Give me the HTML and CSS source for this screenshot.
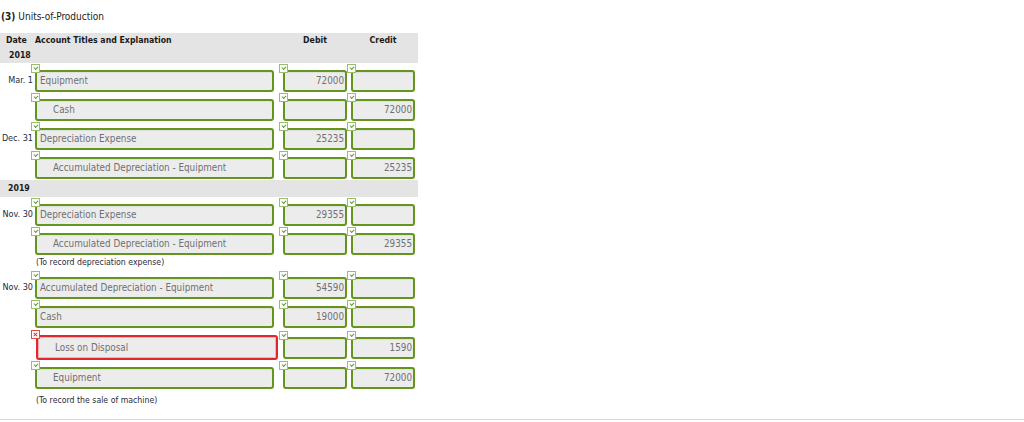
FILE: index.html
```html
<!DOCTYPE html>
<html>
<head>
<meta charset="utf-8">
<link rel="stylesheet" href="styles.css">
</head>
<body>
<div class="title"><b>(3)</b> Units-of-Production</div>
<div class="journal">
  <div class="band head">
    <div class="hrow">
      <span class="c-date">Date</span>
      <span class="c-acct">Account Titles and Explanation</span>
      <span class="c-debit">Debit</span>
      <span class="c-credit">Credit</span>
    </div>
    <div class="hrow"><span class="year">2018</span></div>
  </div>

  <div class="row">
    <div class="c-date date">Mar. 1</div>
    <div class="c-acct field"><i class="chk"></i>Equipment</div>
    <div class="c-debit field num"><i class="chk"></i>72000</div>
    <div class="c-credit field num"><i class="chk"></i></div>
  </div>
  <div class="row">
    <div class="c-date date"></div>
    <div class="c-acct field indent"><i class="chk"></i>Cash</div>
    <div class="c-debit field num"><i class="chk"></i></div>
    <div class="c-credit field num"><i class="chk"></i>72000</div>
  </div>
  <div class="row">
    <div class="c-date date">Dec. 31</div>
    <div class="c-acct field"><i class="chk"></i>Depreciation Expense</div>
    <div class="c-debit field num"><i class="chk"></i>25235</div>
    <div class="c-credit field num"><i class="chk"></i></div>
  </div>
  <div class="row">
    <div class="c-date date"></div>
    <div class="c-acct field indent"><i class="chk"></i>Accumulated Depreciation - Equipment</div>
    <div class="c-debit field num"><i class="chk"></i></div>
    <div class="c-credit field num"><i class="chk"></i>25235</div>
  </div>

  <div class="band year-band"><span class="year">2019</span></div>

  <div class="row">
    <div class="c-date date">Nov. 30</div>
    <div class="c-acct field"><i class="chk"></i>Depreciation Expense</div>
    <div class="c-debit field num"><i class="chk"></i>29355</div>
    <div class="c-credit field num"><i class="chk"></i></div>
  </div>
  <div class="row">
    <div class="c-date date"></div>
    <div class="c-acct field indent"><i class="chk"></i>Accumulated Depreciation - Equipment</div>
    <div class="c-debit field num"><i class="chk"></i></div>
    <div class="c-credit field num"><i class="chk"></i>29355</div>
  </div>
  <div class="note">(To record depreciation expense)</div>

  <div class="row">
    <div class="c-date date">Nov. 30</div>
    <div class="c-acct field"><i class="chk"></i>Accumulated Depreciation - Equipment</div>
    <div class="c-debit field num"><i class="chk"></i>54590</div>
    <div class="c-credit field num"><i class="chk"></i></div>
  </div>
  <div class="row">
    <div class="c-date date"></div>
    <div class="c-acct field"><i class="chk"></i>Cash</div>
    <div class="c-debit field num"><i class="chk"></i>19000</div>
    <div class="c-credit field num"><i class="chk"></i></div>
  </div>
  <div class="row row-tall">
    <div class="c-date date"></div>
    <div class="c-acct field indent wrong"><i class="chk bad"></i>Loss on Disposal</div>
    <div class="c-debit field num low"><i class="chk"></i></div>
    <div class="c-credit field num low"><i class="chk"></i>1590</div>
  </div>
  <div class="row">
    <div class="c-date date"></div>
    <div class="c-acct field indent"><i class="chk"></i>Equipment</div>
    <div class="c-debit field num"><i class="chk"></i></div>
    <div class="c-credit field num"><i class="chk"></i>72000</div>
  </div>
  <div class="note note-last">(To record the sale of machine)</div>
</div>
<div class="rule"></div>
</body>
</html>
```

FILE: styles.css
```css
html, body {
  margin: 0;
  padding: 0;
  background: #ffffff;
}
body {
  font-family: "DejaVu Sans Condensed", "DejaVu Sans", "Liberation Sans", sans-serif;
  font-stretch: condensed;
  font-size: 10px;
  color: #222;
  width: 1024px;
  height: 422px;
  overflow: hidden;
}
.title {
  padding: 10px 0 0 1px;
  margin-bottom: 10px;
  height: 23px;
  line-height: 13px;
  font-size: 10px;
  color: #222;
  box-sizing: border-box;
}
.title b {
  font-weight: bold;
}
.journal {
  width: 418px;
}
.band {
  background: #e4e4e4;
}
.head {
  height: 30px;
  padding-top: 0;
}
.hrow {
  display: flex;
  height: 15px;
  line-height: 15px;
  font-weight: bold;
  font-size: 8.7px;
  color: #1a1a1a;
}
.hrow .c-date {
  padding-left: 6px;
  box-sizing: border-box;
}
.hrow .c-debit, .hrow .c-credit {
  text-align: center;
}
.year {
  padding-left: 9px;
  font-weight: bold;
  color: #1a1a1a;
}
.year-band {
  margin-top: 1px;
  height: 17px;
  line-height: 17px;
  font-size: 8.7px;
}
.year-band .year {
  padding-left: 8px;
}
.c-date {
  width: 35px;
  flex: none;
}
.c-acct {
  width: 239px;
  flex: none;
}
.c-debit {
  width: 64px;
  margin-left: 9px;
  flex: none;
}
.c-credit {
  width: 64px;
  margin-left: 4px;
  flex: none;
}
.row {
  display: flex;
  height: 29px;
  padding-top: 7px;
  box-sizing: border-box;
  align-items: flex-start;
}
.row-tall {
  height: 32px;
}
.date {
  height: 22px;
  line-height: 20px;
  text-align: right;
  padding-right: 2px;
  box-sizing: border-box;
  color: #1d2a48;
  white-space: nowrap;
  font-size: 9px;
}
.field {
  position: relative;
  height: 22px;
  box-sizing: border-box;
  border: 2px solid #64951c;
  border-radius: 3px;
  background: #ececec;
  box-shadow: inset 0 1px 1px rgba(0,0,0,0.06);
  color: #707070;
  line-height: 18px;
  padding: 0 3px;
  white-space: nowrap;
  font-size: 9.8px;
}
.indent {
  padding-left: 16px;
}
.num {
  text-align: right;
  padding-right: 1px;
}
.low {
  margin-top: 2px;
}
.wrong {
  width: 242px;
  height: 25px;
  margin-left: 1px;
  margin-right: -4px;
  border: 2px solid #e3262c;
  box-shadow: inset 0 0 0 1px #f6b3b3;
  line-height: 21px;
  padding-left: 17px;
}
.chk {
  position: absolute;
  left: -6px;
  top: -8px;
  width: 9px;
  height: 9px;
  box-sizing: border-box;
  border: 1px solid #98c06a;
  background: #fff;
}
.chk::after {
  content: "";
  position: absolute;
  left: 2px;
  top: 1px;
  width: 3px;
  height: 2px;
  border-left: 1px solid #5c9a2a;
  border-bottom: 1px solid #5c9a2a;
  transform: rotate(-45deg);
}
.chk.bad {
  border-color: #e04a4a;
  left: -7px;
  top: -7px;
}
.chk.bad::before, .chk.bad::after {
  content: "";
  position: absolute;
  left: 1px;
  top: 3px;
  width: 5px;
  height: 1px;
  border: 0;
  background: #e02020;
  transform: rotate(45deg);
}
.chk.bad::before {
  transform: rotate(-45deg);
}
.note {
  height: 15px;
  line-height: 15px;
  padding-left: 36px;
  color: #2a2a3a;
  font-size: 8.7px;
}
.note-last {
  height: 22px;
  line-height: 22px;
}
.rule {
  margin-top: 8px;
  border-top: 1px solid #d3dae6;
}
```
